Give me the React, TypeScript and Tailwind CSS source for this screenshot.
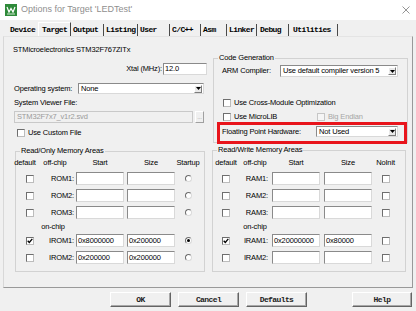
import type { ReactNode } from 'react';

const sans = "font-['Liberation_Sans',Arial,sans-serif] text-[7.5px] tracking-[-0.15px]";
const mono = "font-['Liberation_Mono','Courier_New',monospace] text-[8px] font-bold tracking-[-0.6px]";

function Check({ checked = false, disabled = false }: { checked?: boolean; disabled?: boolean }) {
  return (
    <span
      className={
        disabled
          ? 'flex h-[8px] w-[8px] shrink-0 border border-[#c6c6c6] bg-[#f5f5f5]'
          : 'flex h-[8px] w-[8px] shrink-0 items-center justify-center border border-t-[#6e6e6e] border-l-[#6e6e6e] border-r-[#bcbcbc] border-b-[#bcbcbc] bg-white'
      }
    >
      {checked && (
        <svg width="6" height="6" viewBox="0 0 6 6">
          <path d="M0.7 2.7 L2.3 4.5 L5.3 0.9" fill="none" stroke="#000" strokeWidth="1.3" />
        </svg>
      )}
    </span>
  );
}

function Radio({ on = false }: { on?: boolean }) {
  return (
    <span className="flex h-[7px] w-[7px] items-center justify-center rounded-full border border-t-[#6c6c6c] border-l-[#6c6c6c] border-r-[#dadada] border-b-[#dadada] bg-white">
      {on && <span className="h-[3px] w-[3px] rounded-full bg-black" />}
    </span>
  );
}

function Field({ value = '', className = '' }: { value?: string; className?: string }) {
  return (
    <div
      className={`flex shrink-0 items-center overflow-hidden whitespace-nowrap border border-t-[#8a8a8a] border-l-[#8a8a8a] border-r-[#d9d9d9] border-b-[#d9d9d9] bg-white pl-[1px] leading-none ${className}`}
    >
      {value}
    </div>
  );
}

function Combo({ value, className = '' }: { value: string; className?: string }) {
  return (
    <div
      className={`flex shrink-0 items-center border border-t-[#8a8a8a] border-l-[#8a8a8a] border-r-[#d9d9d9] border-b-[#d9d9d9] bg-white ${className}`}
    >
      <span className="flex-1 overflow-hidden whitespace-nowrap pl-[2px] leading-none">{value}</span>
      <span className="mr-[1px] flex h-[8px] w-[8px] items-center justify-center border border-t-white border-l-white border-r-[#7c7c7c] border-b-[#7c7c7c] bg-[#e9e9e9]">
        <svg width="5" height="3" viewBox="0 0 5 3">
          <path d="M0 0H5L2.5 3Z" fill="#000" />
        </svg>
      </span>
    </div>
  );
}

function Group({ title, className = '', children }: { title: string; className?: string; children: ReactNode }) {
  return (
    <fieldset className={`border border-[#d2d2d2] ${className}`}>
      <legend className="ml-[4px] px-[1px] leading-[10px]">{title}</legend>
      {children}
    </fieldset>
  );
}

function RomRow({ name, start = '', size = '', checked = false, on = false, className = '' }: {
  name: string; start?: string; size?: string; checked?: boolean; on?: boolean; className?: string;
}) {
  return (
    <div className={`flex h-[13px] items-center pl-[10px] ${className}`}>
      <Check checked={checked} />
      <span className="w-[40px] text-right">{name}:</span>
      <Field value={start} className="ml-[2px] h-[13px] w-[48px]" />
      <Field value={size} className="ml-[3px] h-[13px] w-[48px]" />
      <span className="flex w-[26px] justify-center">
        <Radio on={on} />
      </span>
    </div>
  );
}

function RamRow({ name, start = '', size = '', checked = false, className = '' }: {
  name: string; start?: string; size?: string; checked?: boolean; className?: string;
}) {
  return (
    <div className={`flex h-[13px] items-center pl-[9px] ${className}`}>
      <Check checked={checked} />
      <span className="w-[38px] text-right">{name}:</span>
      <Field value={start} className="ml-[4px] h-[13px] w-[48px]" />
      <Field value={size} className="ml-[4px] h-[13px] w-[48px]" />
      <span className="flex w-[27px] justify-center">
        <Check />
      </span>
    </div>
  );
}

function Btn({ label, className = '' }: { label: string; className?: string }) {
  return (
    <div
      className={`flex h-[15px] items-center justify-center border border-t-white border-l-white border-r-[#646464] border-b-[#646464] bg-[#f0f0f0] text-[#222] shadow-[inset_-1px_-1px_0_#a8a8a8] ${mono} ${className}`}
    >
      {label}
    </div>
  );
}

const tabs = [
  { name: 'Device', w: 'w-[34px] pl-[6px]' },
  { name: 'Target', w: 'w-[33px] pl-[3px]', active: true },
  { name: 'Output', w: 'w-[33px] pl-[2px]' },
  { name: 'Listing', w: 'w-[34px] pl-[2px]' },
  { name: 'User', w: 'w-[32px] pl-[2px]' },
  { name: 'C/C++', w: 'w-[31px] pl-[2px]' },
  { name: 'Asm', w: 'w-[26px] pl-[2px]' },
  { name: 'Linker', w: 'w-[30px] pl-[2px]' },
  { name: 'Debug', w: 'w-[32px] pl-[3px]' },
  { name: 'Utilities', w: 'w-[49px] pl-[4px]' },
];

export default function App() {
  return (
    <div className={`h-[311px] w-[416px] overflow-hidden bg-[#f0f0f0] text-black ${sans}`}>
      {/* title bar */}
      <div className="flex h-[20px] items-center bg-white">
        <svg className="ml-[5px]" width="12" height="12" viewBox="0 0 12 12">
          <rect width="12" height="12" fill="#2f8a3a" />
          <path d="M2 3 L4 8 L6 4.5 L8 8 L10 3" fill="none" stroke="#fff" strokeWidth="1.2" />
          <rect x="2" y="9.5" width="8" height="1" fill="#cfe8cf" />
        </svg>
        <span className="ml-[4px] text-[9px] tracking-normal text-[#8f8f8f]">Options for Target 'LEDTest'</span>
        <svg className="ml-auto mr-[6px]" width="8" height="8" viewBox="0 0 8 8">
          <path d="M0.5 0.5 L7.5 7.5 M7.5 0.5 L0.5 7.5" stroke="#7a7a7a" strokeWidth="0.8" />
        </svg>
      </div>

      {/* tabs */}
      <div className={`flex h-[16px] items-end pl-[4px] ${mono}`}>
        {tabs.map((t, i) =>
          t.active ? (
            <div key={i} className={`flex h-[14px] items-center border-l border-t border-r border-l-white border-t-white border-r-[#444] ${t.w}`}>
              {t.name}
            </div>
          ) : (
            <div key={i} className={`flex h-[12px] items-center ${i === 0 ? '' : 'border-r border-r-[#4a4a4a]'} ${t.w}`}>
              {t.name}
            </div>
          ),
        )}
      </div>

      {/* page */}
      <div className="ml-[3px] flex h-[252px] w-[410px] border border-t-[#e4e4e4] border-l-[#d8d8d8] border-r-[#999] border-b-[#999]">
        {/* left column */}
        <div className="ml-[9px] flex w-[195px] flex-col pt-[8px]">
          <div className="h-[10px] leading-[10px]">STMicroelectronics STM32F767ZITx</div>
          <div className="mt-[8px] flex h-[12px] items-center justify-end pr-[1px]">
            <span className="mr-[1px]">Xtal (MHz):</span>
            <Field value="12.0" className="h-[12px] w-[44px]" />
          </div>
          <div className="mt-[8px] flex h-[11px] items-center pl-[1px]">
            <span className="w-[64px]">Operating system:</span>
            <Combo value="None" className="h-[11px] w-[126px]" />
          </div>
          <div className="mt-[4px] h-[10px] pl-[1px] leading-[10px]">System Viewer File:</div>
          <div className="mt-[3px] flex h-[12px] items-center pl-[1px]">
            <div className="flex h-[12px] w-[179px] items-center border border-[#c9c9c9] bg-[#f0f0f0] pl-[2px] text-[#9a9a9a]">
              STM32F7x7_v1r2.svd
            </div>
            <div className="ml-[2px] flex h-[12px] w-[9px] items-end justify-center border border-t-white border-l-white border-r-[#a0a0a0] border-b-[#a0a0a0] pb-[2px] text-[6px] leading-none text-[#9a9a9a]">
              ...
            </div>
          </div>
          <div className="mt-[6px] flex h-[8px] items-center pl-[4px]">
            <Check />
            <span className="ml-[3px]">Use Custom File</span>
          </div>

          <Group title="Read/Only Memory Areas" className="ml-[2px] mt-[9px] w-[190px]">
            <div className="flex flex-col pb-[7px] pt-[2px]">
              <div className="flex h-[10px] items-center">
                <span className="flex w-[18px] justify-center whitespace-nowrap">default</span>
                <span className="flex w-[42px] justify-center whitespace-nowrap">off-chip</span>
                <span className="flex w-[48px] justify-center">Start</span>
                <span className="ml-[3px] flex w-[48px] justify-center">Size</span>
                <span className="flex w-[26px] justify-center">Startup</span>
              </div>
              <RomRow name="ROM1" className="mt-[4px]" />
              <RomRow name="ROM2" className="mt-[4px]" />
              <RomRow name="ROM3" className="mt-[4px]" />
              <div className="mt-[2px] flex h-[11px] items-center">
                <span className="w-[18px]" />
                <span className="flex w-[38px] justify-center whitespace-nowrap">on-chip</span>
              </div>
              <RomRow name="IROM1" start="0x8000000" size="0x200000" checked on className="mt-[2px]" />
              <RomRow name="IROM2" start="0x200000" size="0x200000" className="mt-[4px]" />
            </div>
          </Group>
        </div>

        {/* right column */}
        <div className="ml-[4px] flex w-[194px] flex-col">
          <Group title="Code Generation" className="ml-[1px] mt-[16px] w-[192px]">
            <div className="flex flex-col">
              <div className="mt-[2px] flex h-[12px] items-center pl-[8px]">
                <span className="w-[58px]">ARM Compiler:</span>
                <Combo value="Use default compiler version 5" className="h-[12px] w-[118px]" />
              </div>
              <div className="mt-[22px] flex h-[8px] items-center pl-[9px]">
                <Check />
                <span className="ml-[3px]">Use Cross-Module Optimization</span>
              </div>
              <div className="mt-[6px] flex h-[8px] items-center pl-[9px]">
                <Check />
                <span className="w-[86px] pl-[3px]">Use MicroLIB</span>
                <Check disabled />
                <span className="pl-[3px] text-[#a6a6a6]">Big Endian</span>
              </div>
              <div className="mb-[-2px] ml-[3px] mt-[1px] flex h-[22px] w-[190px] shrink-0 items-start border-[3px] border-[#e8141b] pt-[1px]">
                <span className="pl-[2px] leading-[11px]">Floating Point Hardware:</span>
                <Combo value="Not Used" className="ml-auto mr-[6px] h-[11px] w-[82px]" />
              </div>
            </div>
          </Group>

          <Group title="Read/Write Memory Areas" className="mt-[2px] w-[194px]">
            <div className="flex flex-col pb-[7px] pt-[3px]">
              <div className="flex h-[10px] items-center">
                <span className="flex w-[26px] justify-center whitespace-nowrap">default</span>
                <span className="flex w-[32px] justify-center whitespace-nowrap">off-chip</span>
                <span className="ml-[1px] flex w-[48px] justify-center">Start</span>
                <span className="ml-[4px] flex w-[48px] justify-center">Size</span>
                <span className="flex w-[27px] justify-center">NoInit</span>
              </div>
              <RamRow name="RAM1" className="mt-[4px]" />
              <RamRow name="RAM2" className="mt-[4px]" />
              <RamRow name="RAM3" className="mt-[4px]" />
              <div className="mt-[2px] flex h-[11px] items-center">
                <span className="w-[26px]" />
                <span className="flex w-[32px] justify-center whitespace-nowrap">on-chip</span>
              </div>
              <RamRow name="IRAM1" start="0x20000000" size="0x80000" checked className="mt-[2px]" />
              <RamRow name="IRAM2" className="mt-[4px]" />
            </div>
          </Group>
        </div>
      </div>

      {/* buttons */}
      <div className="mt-[4px] flex h-[15px]">
        <Btn label="OK" className="ml-[110px] w-[61px]" />
        <Btn label="Cancel" className="ml-[7px] w-[61px]" />
        <Btn label="Defaults" className="ml-[7px] w-[61px]" />
        <Btn label="Help" className="ml-[45px] w-[60px]" />
      </div>
    </div>
  );
}
